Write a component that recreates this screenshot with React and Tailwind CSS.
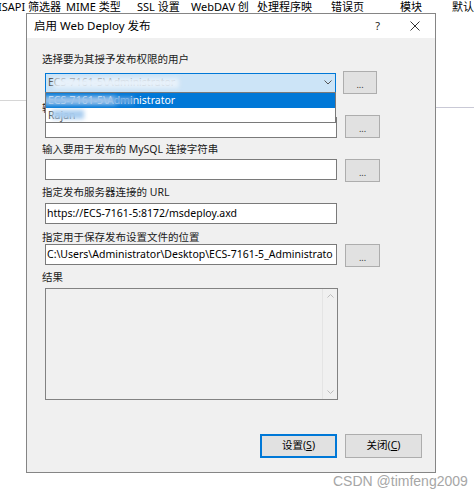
import React from 'react';

function DotsButton({ className = '' }) {
  return (
    <button
      type="button"
      className={`h-[23px] bg-[#e1e1e1] border border-[#adadad] flex items-center justify-center text-[9px] leading-none text-[#333] pt-[3px] ${className}`}
    >
      ...
    </button>
  );
}

function Label({ children, className = '' }) {
  return <div className={`text-[10.5px] leading-[14px] text-[#1a1a1a] whitespace-nowrap ${className}`}>{children}</div>;
}

function TextBox({ value = '', className = '' }) {
  return (
    <div className={`w-[292px] h-[21px] bg-white border border-[#7a7a7a] flex items-center pl-[1px] text-[10.5px] text-black whitespace-nowrap overflow-hidden ${className}`}>
      {value}
    </div>
  );
}

export default function App() {
  return (
    <div className="relative w-[474px] h-[495px] bg-white overflow-hidden font-['Noto_Sans','Noto_Sans_CJK_SC',sans-serif] text-black">
      {/* IIS feature tabs behind the dialog */}
      <div className="flex h-[14px] items-center text-[11px] leading-[14px] whitespace-nowrap -ml-[2px]">
        <span className="w-[68px] shrink-0">ISAPI 筛选器</span>
        <span className="w-[71px] shrink-0">MIME 类型</span>
        <span className="w-[54px] shrink-0">SSL 设置</span>
        <span className="w-[66px] shrink-0">WebDAV 创</span>
        <span className="w-[74px] shrink-0">处理程序映</span>
        <span className="w-[69px] shrink-0">错误页</span>
        <span className="w-[52px] shrink-0">模块</span>
        <span className="shrink-0">默认</span>
      </div>
      <div className="absolute left-0 top-[100px] w-[26px] h-px bg-[#d6d6d6]" />
      <div className="absolute left-[436px] top-[107px] w-[38px] h-px bg-[#c9c9d6]" />

      {/* dialog window */}
      <div className="absolute left-[26px] top-[13px] w-[410px] h-[460px] border border-[#858585] bg-[#f0f0f0] flex flex-col">
        {/* title bar */}
        <div className="h-[24px] bg-white flex items-center pl-[7px] pr-[15px] shrink-0">
          <span className="text-[11.5px] text-black whitespace-nowrap">启用 Web Deploy 发布</span>
          <span className="ml-auto text-[11px] text-[#222]">?</span>
          <svg className="ml-[30px]" width="10" height="10" viewBox="0 0 10 10">
            <path d="M0.5 0.5 L9.5 9.5 M9.5 0.5 L0.5 9.5" stroke="#333" strokeWidth="1" fill="none" />
          </svg>
        </div>

        {/* body */}
        <div className="flex flex-col pl-[15px] pt-[14px]">
          <Label>选择要为其授予发布权限的用户</Label>

          {/* user combo with open dropdown */}
          <div className="relative flex items-start ml-[3px] mt-[5px]">
            <div className="relative w-[291px] h-[20px] mt-[2px] bg-[#cce4f7] border border-[#0078d7] flex items-center pl-[2px] text-[10.5px] whitespace-nowrap overflow-hidden">
              <span className="text-[#555]">ECS-7161-5\Administrator</span>
              <div className="absolute left-[8px] top-[4px] w-[125px] h-[10px] bg-[#e8f1fa] blur-[2px]" />
              <svg className="absolute right-[3px] top-[6px]" width="8" height="5" viewBox="0 0 8 5">
                <path d="M0.5 0.5 L4 4 L7.5 0.5" stroke="#555" strokeWidth="1" fill="none" />
              </svg>
            </div>
            <DotsButton className="w-[34px] ml-[7px]" />

            <div className="absolute left-0 top-[21px] w-[291px] h-[31px] bg-white border border-[#7a7a7a] flex flex-col z-10">
              <div className="relative h-[15px] bg-[#0078d7] text-white text-[10.5px] leading-[15px] pl-[2px] whitespace-nowrap overflow-hidden">
                ECS-7161-5\Administrator
                <div className="absolute left-[-2px] top-[3px] w-[72px] h-[9px] bg-[#9cc3ea] blur-[2px]" />
                <div className="absolute left-[68px] top-[4px] w-[20px] h-[7px] bg-[#5fa2e0] blur-[2px]" />
              </div>
              <div className="relative h-[14px] text-[10.5px] leading-[14px] pl-[2px] text-[#444] whitespace-nowrap overflow-hidden">
                Rajan
                <div className="absolute left-[6px] top-[2px] w-[32px] h-[9px] bg-[#a9cdef] blur-[2px]" />
              </div>
            </div>
          </div>

          <Label className="mt-[7px]">输入要用于发布的 SQL Server 连接字符串</Label>
          <div className="flex items-start ml-[3px]">
            <TextBox className="mt-[2px]" />
            <DotsButton className="w-[35px] ml-[8px]" />
          </div>

          <Label className="mt-[4px]">输入要用于发布的 MySQL 连接字符串</Label>
          <div className="flex items-start ml-[3px] mt-[3px]">
            <TextBox />
            <DotsButton className="w-[35px] ml-[8px]" />
          </div>

          <Label className="mt-[3px]">指定发布服务器连接的 URL</Label>
          <div className="flex items-start ml-[3px] mt-[4px]">
            <TextBox value="https://ECS-7161-5:8172/msdeploy.axd" />
          </div>

          <Label className="mt-[6px]">指定用于保存发布设置文件的位置</Label>
          <div className="flex items-start ml-[3px]">
            <TextBox value="C:\Users\Administrator\Desktop\ECS-7161-5_Administrato" />
            <DotsButton className="w-[35px] ml-[8px]" />
          </div>

          <Label className="mt-[3px]">结果</Label>
          <div className="ml-[3px] mt-[4px] w-[293px] h-[112px] border border-[#828282] bg-[#f0f0f0] flex">
            <div className="flex-1" />
            <div className="w-[15px] border-l border-[#e4e4e4] flex flex-col items-center justify-between py-[5px]">
              <svg width="7" height="4" viewBox="0 0 7 4">
                <path d="M0.5 3.5 L3.5 0.5 L6.5 3.5" stroke="#bdbdbd" strokeWidth="1" fill="none" />
              </svg>
              <svg width="7" height="4" viewBox="0 0 7 4">
                <path d="M0.5 0.5 L3.5 3.5 L6.5 0.5" stroke="#bdbdbd" strokeWidth="1" fill="none" />
              </svg>
            </div>
          </div>

          {/* dialog buttons */}
          <div className="flex justify-end gap-[8px] pr-[13px] mt-[34px]">
            <button type="button" className="w-[77px] h-[24px] bg-[#e1e1e1] border-2 border-[#0078d7] text-[10.5px] text-black">
              设置(<span className="underline">S</span>)
            </button>
            <button type="button" className="w-[77px] h-[24px] bg-[#e1e1e1] border border-[#adadad] text-[10.5px] text-black">
              关闭(<span className="underline">C</span>)
            </button>
          </div>
        </div>
      </div>

      {/* watermark */}
      <div className="absolute left-[333px] top-[473px] text-[14px] leading-[16px] text-[#a6a6a6] font-['Liberation_Sans',sans-serif] whitespace-nowrap">
        CSDN @timfeng2009
      </div>
    </div>
  );
}
